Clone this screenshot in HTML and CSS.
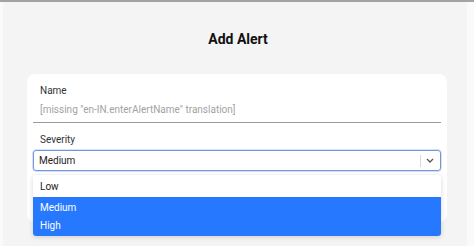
FILE: index.html
```html
<!DOCTYPE html>
<html>
<head>
<meta charset="utf-8">
<link rel="stylesheet" href="styles.css">
</head>
<body>
<div class="frame">
  <div class="panel">
    <h1 class="title">Add Alert</h1>
    <div class="card">
      <div class="field">
        <label class="label">Name</label>
        <div class="text-input">[missing "en-IN.enterAlertName" translation]</div>
      </div>
      <div class="field sev">
        <label class="label">Severity</label>
        <div class="select">
          <span class="select-value">Medium</span>
          <span class="select-sep"></span>
          <svg class="chev" width="8" height="5" viewBox="0 0 8 5"><path d="M1 1 L4 4 L7 1" fill="none" stroke="#555" stroke-width="1.3"/></svg>
        </div>
        <div class="menu">
          <div class="opt first">Low</div>
          <div class="opt sel mid">Medium</div>
          <div class="opt sel">High</div>
        </div>
      </div>
    </div>
  </div>
</div>
</body>
</html>
```
FILE: styles.css
```css
* { box-sizing: border-box; }
html, body { margin: 0; padding: 0; }
body {
  width: 474px;
  height: 250px;
  overflow: hidden;
  background: #ffffff;
  font-family: Roboto, "Liberation Sans", sans-serif;
}
.frame {
  height: 246px;
  border-top: 2px solid #a3a3a3;
  padding-left: 3px;
  padding-right: 7px;
  background: #fafafa;
}
.panel {
  height: 244px;
  background: #f4f4f4;
  padding: 0 20px 0 24px;
}
.title {
  margin: 0;
  padding-top: 28px;
  height: 72px;
  line-height: 18px;
  text-align: center;
  font-size: 14px;
  font-weight: 700;
  color: #111;
  padding-left: 2px;
}
.card {
  background: #fff;
  border-radius: 8px;
  height: 148px;
  padding: 8px 6px 0 6px;
}
.field { display: flex; flex-direction: column; }
.label {
  font-size: 10px;
  color: #333;
  padding-left: 7px;
  height: 18px;
  line-height: 18px;
}
.text-input {
  font-size: 10px;
  color: #a2a2a2;
  padding-left: 7px;
  height: 23px;
  line-height: 20px;
  padding-bottom: 2px;
  border-bottom: 1px solid #9a9a9a;
}
.sev { margin-top: 8px; position: relative; }
.select {
  margin-top: 1px;
  height: 21px;
  border: 1px solid #7396df;
  border-radius: 3px;
  display: flex;
  align-items: center;
  padding-left: 5px;
  box-shadow: 0 0 0 0.5px #b0c5f0;
}
.select-value { flex: 1; font-size: 10px; color: #222; }
.select-sep { width: 1px; height: 12px; background: #d8d8d8; }
.chev { margin: 0 6px 0 5px; }
.menu {
  position: absolute;
  left: 0;
  right: 0;
  top: 44px;
  background: #fff;
  border-radius: 3px;
  box-shadow: 0 1px 5px rgba(0,0,0,0.16);
  overflow: hidden;
}
.opt {
  height: 20px;
  line-height: 20px;
  font-size: 10px;
  color: #222;
  padding-left: 7px;
}
.opt.first { height: 22px; line-height: 24px; }
.opt.mid { height: 19px; line-height: 21px; }
.opt.sel { background: #2678ff; color: #fff; }
```
